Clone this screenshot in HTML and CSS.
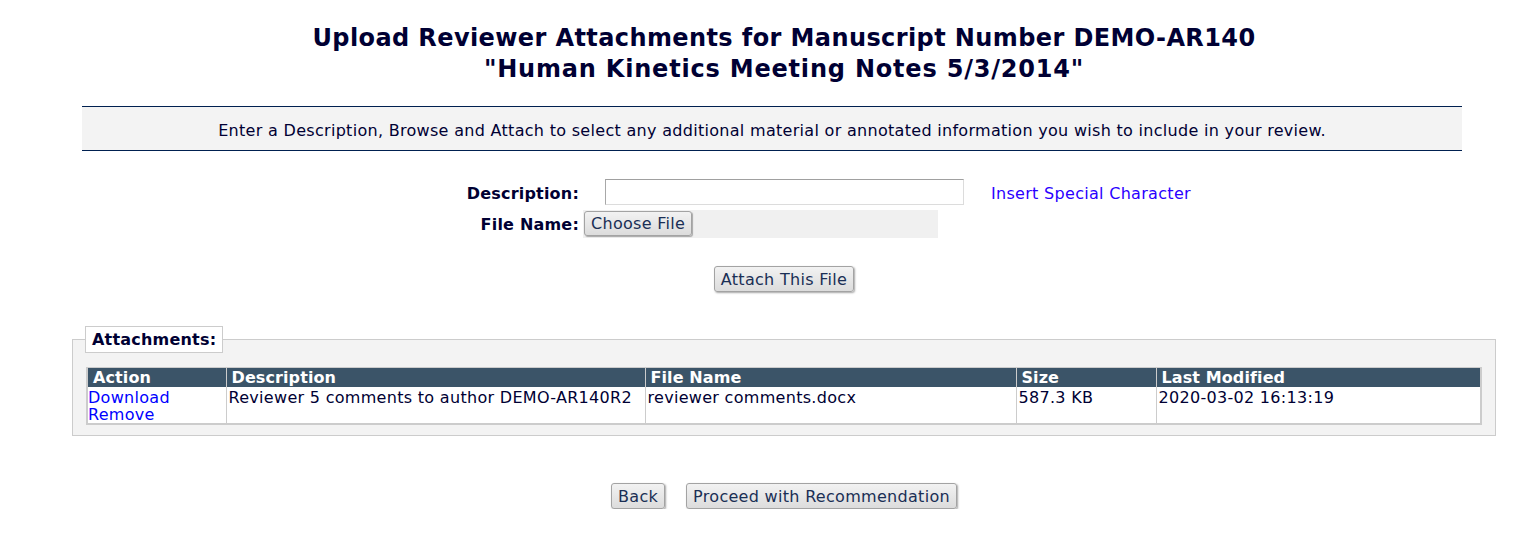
FILE: index.html
```
<!DOCTYPE html>
<html>
<head>
<meta charset="utf-8">
<link rel="stylesheet" href="styles.css">
</head>
<body>
<div class="page">
  <h1 class="title">Upload Reviewer Attachments for Manuscript Number DEMO-AR140<br><span class="sub">"Human Kinetics Meeting Notes 5/3/2014"</span></h1>
  <div class="info">Enter a Description, Browse and Attach to select any additional material or annotated information you wish to include in your review.</div>
  <div class="form">
    <div class="row">
      <label class="lbl lbl-desc">Description:</label>
      <input class="text-in" type="text">
      <a class="special" href="#">Insert Special Character</a>
    </div>
    <div class="row">
      <label class="lbl lbl-file">File Name:</label>
      <span class="file-in"><span class="btn choose">Choose File</span></span>
    </div>
  </div>
  <div class="center attach-wrap"><span class="btn">Attach This File</span></div>
  <div class="fieldset">
    <div class="legend">Attachments:</div>
    <table class="att">
      <colgroup>
        <col class="c1"><col class="c2"><col class="c3"><col class="c4"><col class="c5">
      </colgroup>
      <thead>
        <tr><th>Action</th><th>Description</th><th>File Name</th><th>Size</th><th>Last Modified</th></tr>
      </thead>
      <tbody>
        <tr>
          <td class="act"><a href="#">Download</a><br><a href="#">Remove</a></td>
          <td>Reviewer 5 comments to author DEMO-AR140R2</td>
          <td>reviewer comments.docx</td>
          <td>587.3 KB</td>
          <td>2020-03-02 16:13:19</td>
        </tr>
      </tbody>
    </table>
  </div>
  <div class="center bottom-btns"><span class="btn">Back</span><span class="btn">Proceed with Recommendation</span></div>
</div>
</body>
</html>
```
FILE: styles.css
```
html, body {
  margin: 0;
  padding: 0;
  background: #ffffff;
}
body {
  font-family: Verdana, "DejaVu Sans", sans-serif;
  font-size: 16px;
  letter-spacing: 0.3px;
  color: #000033;
}
.page {
  margin-left: 72px;
  width: 1424px;
  padding-top: 23px;
}
.title {
  margin: 0;
  text-align: center;
  font-size: 24px;
  letter-spacing: 0.4px;
  line-height: 31px;
  font-weight: bold;
  color: #000033;
}
.title .sub {
  letter-spacing: 0.8px;
}
.info {
  margin: 21px 34px 0 10px;
  border-top: 1px solid #002050;
  border-bottom: 1px solid #002050;
  background: #f3f3f3;
  height: 43px;
  line-height: 47px;
  text-align: center;
}
.form {
  margin-top: 28px;
  margin-left: 394px;
  display: flex;
  flex-direction: column;
  gap: 5px;
}
.row {
  display: flex;
  align-items: center;
}
.lbl {
  width: 113px;
  text-align: right;
  font-weight: bold;
  letter-spacing: 0.2px;
  white-space: nowrap;
  padding-top: 2px;
}
.lbl-desc { margin-right: 26px; }
.lbl-file { margin-right: 4px; padding-top: 1px; }
.text-in {
  width: 359px;
  height: 26px;
  box-sizing: border-box;
  border: 1px solid #dcdcdc;
  border-top-color: #a0a0a0;
  border-left-color: #a8a8a8;
  margin: 0;
  padding: 0;
}
.special {
  margin-left: 27px;
  color: #2a00ff;
  text-decoration: none;
  padding-top: 2px;
}
.file-in {
  width: 355px;
  height: 28px;
  background: #f0f0f0;
  display: flex;
  align-items: flex-start;
}
.btn {
  display: inline-block;
  box-sizing: border-box;
  height: 26px;
  line-height: 25px;
  padding: 0 6px;
  border: 1px solid #a3a3a3;
  border-radius: 3px;
  background: linear-gradient(#f2f2f2, #dcdcdc);
  box-shadow: 1px 1px 2px rgba(0,0,0,0.35);
  color: #1a2f55;
  white-space: nowrap;
}
.choose {
  margin-left: 1px;
  margin-top: 1px;
  height: 25px;
  line-height: 24px;
  box-shadow: 1px 1px 1px rgba(0,0,0,0.3);
}
.center { text-align: center; }
.attach-wrap { margin-top: 28px; }
.fieldset {
  position: relative;
  margin-top: 47px;
  border: 1px solid #cccccc;
  background: #f3f3f3;
  padding: 27px 13px 10px 13px;
}
.legend {
  position: absolute;
  left: 12px;
  top: -14px;
  background: #ffffff;
  border: 1px solid #cccccc;
  padding: 0 6px;
  height: 25px;
  line-height: 26px;
  font-weight: bold;
  letter-spacing: 0.2px;
}
.att {
  width: 100%;
  border-collapse: collapse;
  border: 2px solid #cccccc;
  border-top: 1px solid #cccccc;
  background: #ffffff;
  table-layout: fixed;
}
.c1 { width: 139px; }
.c2 { width: 419px; }
.c3 { width: 371px; }
.c4 { width: 140px; }
.c5 { width: auto; }
.att th {
  background: #3b5468;
  color: #ffffff;
  font-weight: bold;
  text-align: left;
  height: 18px;
  line-height: 19px;
  padding: 0 5px;
  border-left: 1px solid #cccccc;
  letter-spacing: 0.1px;
}
.att td {
  vertical-align: top;
  padding: 2px 2px 0 2px;
  border-left: 1px solid #cccccc;
  line-height: 17px;
}
.att td.act {
  padding-left: 0;
}
.att a {
  color: #0000ff;
  text-decoration: none;
}
.bottom-btns {
  margin-top: 47px;
  display: flex;
  justify-content: center;
  gap: 21px;
}
```
